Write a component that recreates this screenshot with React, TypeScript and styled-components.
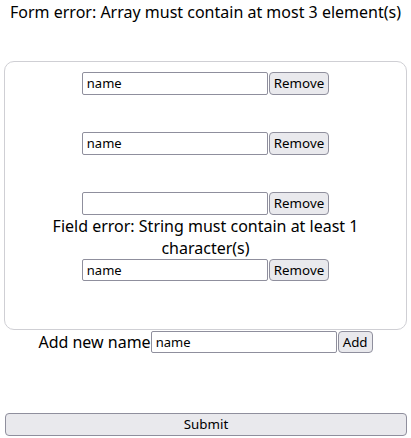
import React, { useState } from 'react';
import styled, { createGlobalStyle } from 'styled-components';

const GlobalStyle = createGlobalStyle`
  html, body {
    margin: 0;
    padding: 0;
    background: #ffffff;
  }
  body {
    font-family: 'Noto Sans', 'Open Sans', sans-serif;
    font-size: 16px;
    color: #000000;
  }
`;

const Page = styled.form`
  padding: 1px 4px 0;
  text-align: center;
`;

const FormError = styled.div`
  line-height: 22px;
  margin-bottom: 38px;
`;

const NameList = styled.fieldset`
  margin: 0;
  padding: 10px;
  border: 1px solid #cfcfd4;
  border-radius: 10px;
  min-width: 0;
`;

const Item = styled.div`
  min-height: 60px;
`;

const Row = styled.div`
  display: flex;
  justify-content: center;
  align-items: center;
`;

const TextInput = styled.input`
  box-sizing: border-box;
  width: 186px;
  height: 22.5px;
  margin: 0;
  padding: 1px 4px;
  border: 1px solid #8f8f9d;
  border-radius: 2px;
  background: #ffffff;
  font-family: 'Noto Sans', sans-serif;
  font-size: 13px;
  color: #000000;
  outline: none;
`;

const Button = styled.button<{ $wide?: boolean }>`
  box-sizing: border-box;
  height: 22.5px;
  margin: 0 0 0 1px;
  padding: 0 4px;
  width: ${(p) => (p.$wide ? '100%' : 'auto')};
  border: 1px solid #8f8f9d;
  border-radius: 4px;
  background: #e9e9ed;
  font-family: 'Noto Sans', sans-serif;
  font-size: 13.33px;
  color: #000000;
`;

const FieldError = styled.div`
  line-height: 22px;
`;

const AddRow = styled(Row)`
  margin-top: 1px;
`;

const AddLabel = styled.label`
  line-height: 22px;
`;

const SubmitBar = styled.div`
  margin-top: 60px;
  display: flex;
`;

type Entry = { value: string; error?: string };

const App = (): React.JSX.Element => {
  const [entries] = useState<Entry[]>([
    { value: 'name' },
    { value: 'name' },
    { value: '', error: 'Field error: String must contain at least 1 character(s)' },
    { value: 'name' }
  ]);
  const [newName, setNewName] = useState('name');

  return (
    <>
      <GlobalStyle />
      <Page onSubmit={(e) => e.preventDefault()}>
        <FormError>Form error: Array must contain at most 3 element(s)</FormError>
        <NameList>
          {entries.map((entry, idx) => (
            <Item key={idx}>
              <Row>
                <TextInput defaultValue={entry.value} />
                <Button type="button">Remove</Button>
              </Row>
              {entry.error && <FieldError>{entry.error}</FieldError>}
            </Item>
          ))}
        </NameList>
        <AddRow>
          <AddLabel htmlFor="new-name">Add new name</AddLabel>
          <TextInput id="new-name" value={newName} onChange={(e) => setNewName(e.target.value)} />
          <Button type="button">Add</Button>
        </AddRow>
        <SubmitBar>
          <Button type="submit" $wide>
            Submit
          </Button>
        </SubmitBar>
      </Page>
    </>
  );
};

export default App;
